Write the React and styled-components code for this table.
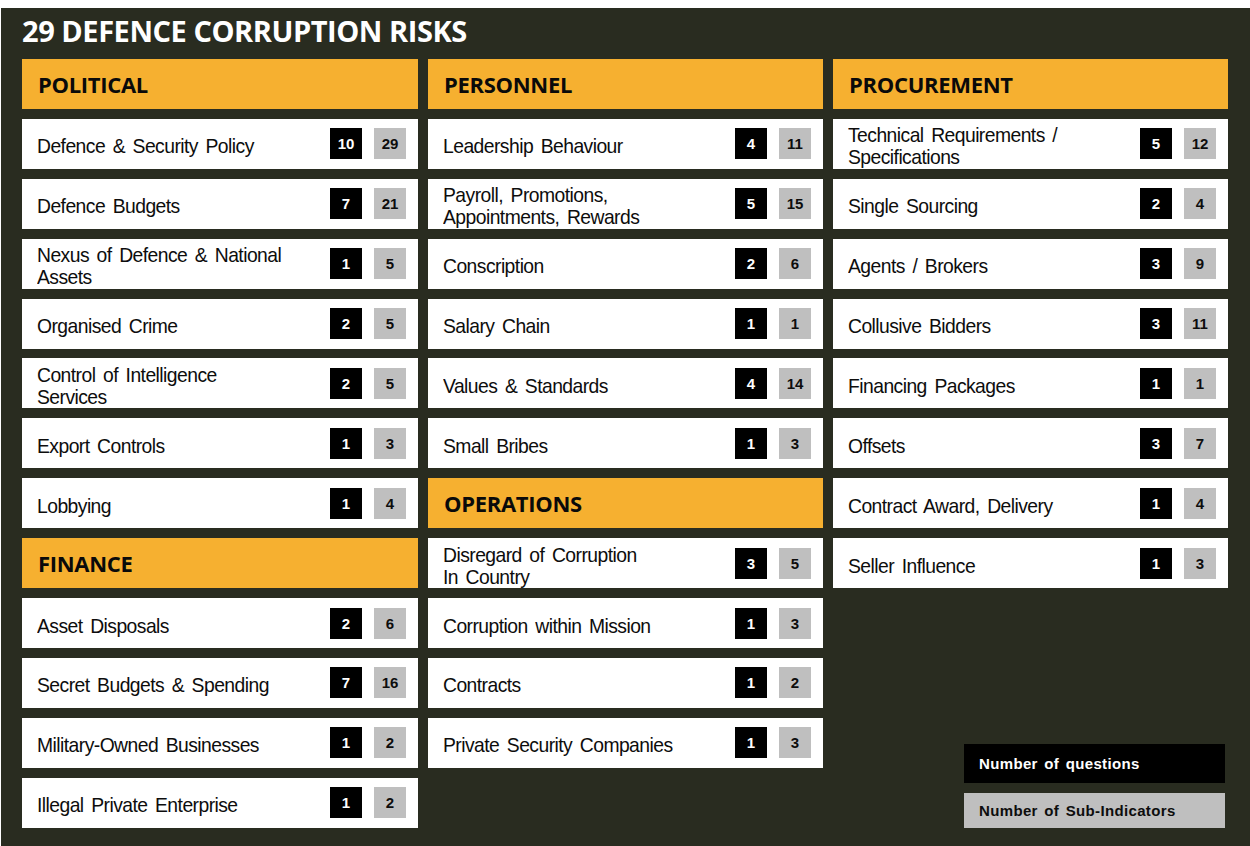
import React from "react";
import styled, { createGlobalStyle } from "styled-components";

const Global = createGlobalStyle`
  html, body { margin: 0; padding: 0; background: #ffffff; }
  body { font-family: "Liberation Sans", Arial, sans-serif; }
`;

const Panel = styled.div`
  margin: 8px 0 0 1px;
  width: 1249px;
  height: 838px;
  box-sizing: border-box;
  background: #292c20;
  padding: 5px 0 0 21px;
  display: flex;
  flex-direction: column;
`;

const Title = styled.h1`
  margin: 0 0 10px 0;
  height: 36px;
  line-height: 36px;
  font-family: "Open Sans", sans-serif;
  font-weight: 700;
  font-size: 29px;
  letter-spacing: -0.45px;
  color: #ffffff;
`;

const Grid = styled.div`
  display: grid;
  grid-template-columns: 396px 395px 395px;
  column-gap: 10px;
  height: 769px;
`;

const Column = styled.div`
  display: flex;
  flex-direction: column;
  gap: 9.9px;
`;

const Header = styled.div`
  height: 50px;
  flex: none;
  background: #f6b030;
  display: flex;
  align-items: center;
  padding: 0 0 1px 16px;
  box-sizing: border-box;
  font-family: "Open Sans", sans-serif;
  font-weight: 700;
  font-size: 22px;
  letter-spacing: -0.3px;
  color: #0a0a0a;
`;

const Row = styled.div`
  height: 50px;
  flex: none;
  background: #ffffff;
  display: flex;
  align-items: center;
  padding: 0 12px 0 15px;
  box-sizing: border-box;
`;

const Label = styled.div`
  flex: 1;
  align-self: stretch;
  display: flex;
  align-items: center;
  padding-top: 5px;
  font-size: 21px;
  line-height: 22px;
  color: #0d0d0d;
  white-space: nowrap;
`;

const LabelText = styled.span`
  display: inline-block;
  letter-spacing: -0.6px;
  word-spacing: 3px;
  transform: scaleX(0.92);
  transform-origin: left center;
`;

const Badges = styled.div`
  display: flex;
  gap: 12px;
  flex: none;
`;

const Badge = styled.div`
  width: 32px;
  height: 31px;
  display: flex;
  align-items: center;
  justify-content: center;
  font-weight: 700;
  font-size: 15px;
  background: ${(p) => (p.$grey ? "#bfbfbf" : "#000000")};
  color: ${(p) => (p.$grey ? "#0d0d0d" : "#ffffff")};
`;

const Legend = styled.div`
  margin-top: auto;
  align-self: flex-end;
  margin-right: 3px;
  width: 261px;
  display: flex;
  flex-direction: column;
  gap: 10px;
`;

const LegendItem = styled.div`
  height: ${(p) => (p.$grey ? "35px" : "39px")};
  display: flex;
  align-items: center;
  padding-left: 15px;
  font-weight: 700;
  font-size: 15px;
  letter-spacing: 0.35px;
  word-spacing: 2px;
  background: ${(p) => (p.$grey ? "#bfbfbf" : "#000000")};
  color: ${(p) => (p.$grey ? "#0d0d0d" : "#ffffff")};
`;

const sections = [
  [
    {
      title: "POLITICAL",
      items: [
        ["Defence & Security Policy", 10, 29],
        ["Defence Budgets", 7, 21],
        ["Nexus of Defence & National\nAssets", 1, 5],
        ["Organised Crime", 2, 5],
        ["Control of Intelligence\nServices", 2, 5],
        ["Export Controls", 1, 3],
        ["Lobbying", 1, 4],
      ],
    },
    {
      title: "FINANCE",
      items: [
        ["Asset Disposals", 2, 6],
        ["Secret Budgets & Spending", 7, 16],
        ["Military-Owned Businesses", 1, 2],
        ["Illegal Private Enterprise", 1, 2],
      ],
    },
  ],
  [
    {
      title: "PERSONNEL",
      items: [
        ["Leadership Behaviour", 4, 11],
        ["Payroll, Promotions,\nAppointments, Rewards", 5, 15],
        ["Conscription", 2, 6],
        ["Salary Chain", 1, 1],
        ["Values & Standards", 4, 14],
        ["Small Bribes", 1, 3],
      ],
    },
    {
      title: "OPERATIONS",
      items: [
        ["Disregard of Corruption\nIn Country", 3, 5],
        ["Corruption within Mission", 1, 3],
        ["Contracts", 1, 2],
        ["Private Security Companies", 1, 3],
      ],
    },
  ],
  [
    {
      title: "PROCUREMENT",
      items: [
        ["Technical Requirements /\nSpecifications", 5, 12],
        ["Single Sourcing", 2, 4],
        ["Agents / Brokers", 3, 9],
        ["Collusive Bidders", 3, 11],
        ["Financing Packages", 1, 1],
        ["Offsets", 3, 7],
        ["Contract Award, Delivery", 1, 4],
        ["Seller Influence", 1, 3],
      ],
    },
  ],
];

function Item({ label, q, s }) {
  const lines = label.split("\n");
  return (
    <Row>
      <Label>
        <LabelText>
          {lines.map((l, i) => (
            <React.Fragment key={i}>
              {i > 0 && <br />}
              {l}
            </React.Fragment>
          ))}
        </LabelText>
      </Label>
      <Badges>
        <Badge>{q}</Badge>
        <Badge $grey>{s}</Badge>
      </Badges>
    </Row>
  );
}

export default function App() {
  return (
    <>
      <Global />
      <Panel>
        <Title>29 DEFENCE CORRUPTION RISKS</Title>
        <Grid>
          {sections.map((col, ci) => (
            <Column key={ci}>
              {col.map((sec) => (
                <React.Fragment key={sec.title}>
                  <Header>{sec.title}</Header>
                  {sec.items.map(([l, q, s]) => (
                    <Item key={l} label={l} q={q} s={s} />
                  ))}
                </React.Fragment>
              ))}
              {ci === 2 && (
                <Legend>
                  <LegendItem>Number of questions</LegendItem>
                  <LegendItem $grey>Number of Sub-Indicators</LegendItem>
                </Legend>
              )}
            </Column>
          ))}
        </Grid>
      </Panel>
    </>
  );
}
